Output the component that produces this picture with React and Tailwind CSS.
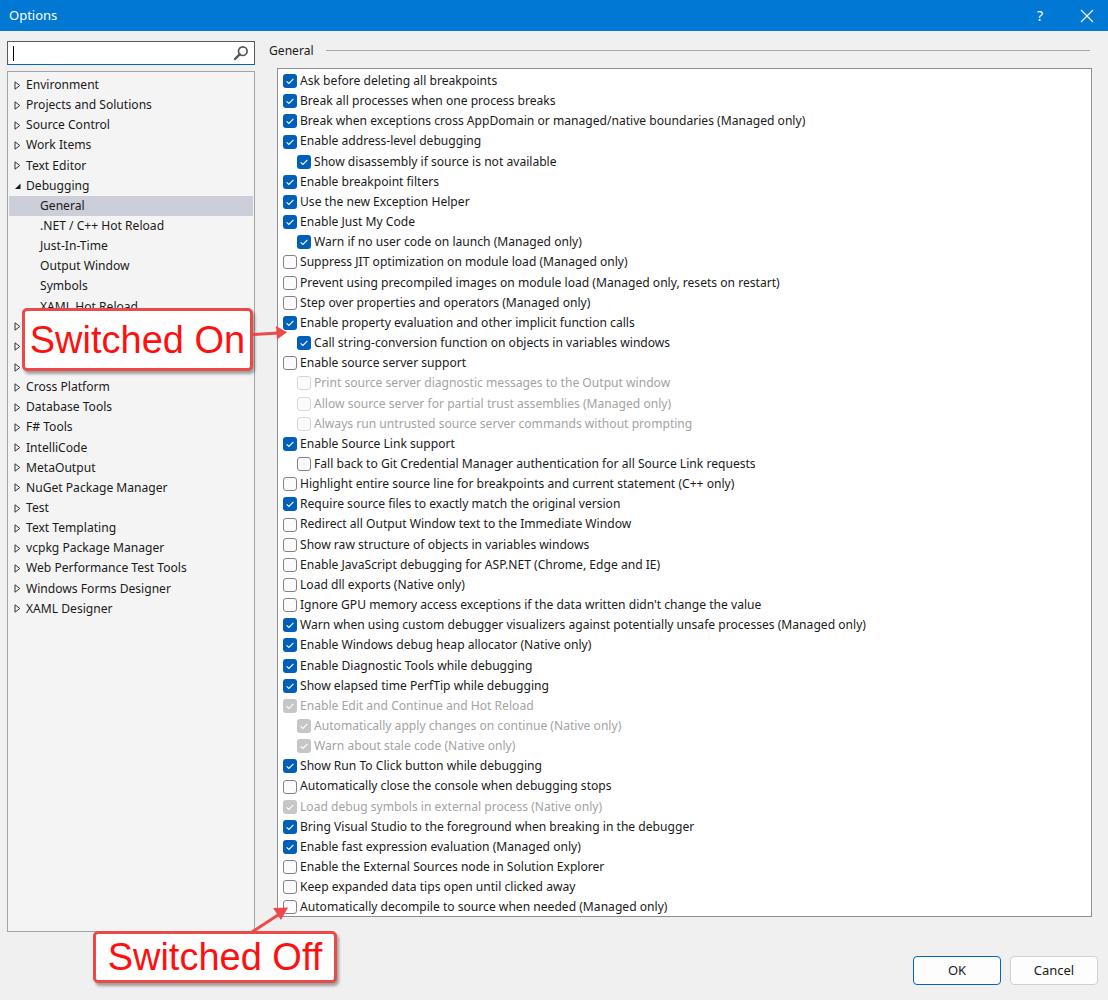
import React from 'react'

const items = [
  ['Ask before deleting all breakpoints', 1, 0, 0],
  ['Break all processes when one process breaks', 1, 0, 0],
  ['Break when exceptions cross AppDomain or managed/native boundaries (Managed only)', 1, 0, 0],
  ['Enable address-level debugging', 1, 0, 0],
  ['Show disassembly if source is not available', 1, 1, 0],
  ['Enable breakpoint filters', 1, 0, 0],
  ['Use the new Exception Helper', 1, 0, 0],
  ['Enable Just My Code', 1, 0, 0],
  ['Warn if no user code on launch (Managed only)', 1, 1, 0],
  ['Suppress JIT optimization on module load (Managed only)', 0, 0, 0],
  ['Prevent using precompiled images on module load (Managed only, resets on restart)', 0, 0, 0],
  ['Step over properties and operators (Managed only)', 0, 0, 0],
  ['Enable property evaluation and other implicit function calls', 1, 0, 0],
  ['Call string-conversion function on objects in variables windows', 1, 1, 0],
  ['Enable source server support', 0, 0, 0],
  ['Print source server diagnostic messages to the Output window', 0, 1, 1],
  ['Allow source server for partial trust assemblies (Managed only)', 0, 1, 1],
  ['Always run untrusted source server commands without prompting', 0, 1, 1],
  ['Enable Source Link support', 1, 0, 0],
  ['Fall back to Git Credential Manager authentication for all Source Link requests', 0, 1, 0],
  ['Highlight entire source line for breakpoints and current statement (C++ only)', 0, 0, 0],
  ['Require source files to exactly match the original version', 1, 0, 0],
  ['Redirect all Output Window text to the Immediate Window', 0, 0, 0],
  ['Show raw structure of objects in variables windows', 0, 0, 0],
  ['Enable JavaScript debugging for ASP.NET (Chrome, Edge and IE)', 0, 0, 0],
  ['Load dll exports (Native only)', 0, 0, 0],
  ["Ignore GPU memory access exceptions if the data written didn't change the value", 0, 0, 0],
  ['Warn when using custom debugger visualizers against potentially unsafe processes (Managed only)', 1, 0, 0],
  ['Enable Windows debug heap allocator (Native only)', 1, 0, 0],
  ['Enable Diagnostic Tools while debugging', 1, 0, 0],
  ['Show elapsed time PerfTip while debugging', 1, 0, 0],
  ['Enable Edit and Continue and Hot Reload', 1, 0, 1],
  ['Automatically apply changes on continue (Native only)', 1, 1, 1],
  ['Warn about stale code (Native only)', 1, 1, 1],
  ['Show Run To Click button while debugging', 1, 0, 0],
  ['Automatically close the console when debugging stops', 0, 0, 0],
  ['Load debug symbols in external process (Native only)', 1, 0, 1],
  ['Bring Visual Studio to the foreground when breaking in the debugger', 1, 0, 0],
  ['Enable fast expression evaluation (Managed only)', 1, 0, 0],
  ['Enable the External Sources node in Solution Explorer', 0, 0, 0],
  ['Keep expanded data tips open until clicked away', 0, 0, 0],
  ['Automatically decompile to source when needed (Managed only)', 0, 0, 0],
]

// [label, level, expanded, selected] — empty labels sit under the "Switched On" callout
const tree = [
  ['Environment', 0], ['Projects and Solutions', 0], ['Source Control', 0], ['Work Items', 0],
  ['Text Editor', 0], ['Debugging', 0, true], ['General', 1, false, true], ['.NET / C++ Hot Reload', 1],
  ['Just-In-Time', 1], ['Output Window', 1], ['Symbols', 1], ['XAML Hot Reload', 1],
  ['', 0], ['', 0], ['', 0],
  ['Cross Platform', 0], ['Database Tools', 0], ['F# Tools', 0], ['IntelliCode', 0], ['MetaOutput', 0],
  ['NuGet Package Manager', 0], ['Test', 0], ['Text Templating', 0], ['vcpkg Package Manager', 0],
  ['Web Performance Test Tools', 0], ['Windows Forms Designer', 0], ['XAML Designer', 0],
]

function Check({ on, off }) {
  if (on) {
    return (
      <div className={`w-[14px] h-[14px] rounded-[3px] shrink-0 flex items-center justify-center ${off ? 'bg-[#c6c6c6]' : 'bg-[#005fb8]'}`}>
        <svg width="14" height="14" viewBox="0 0 14 14">
          <path d="M3.6 7.3 L5.9 9.5 L10.4 4.8" fill="none" stroke="#fff" strokeWidth="1.1" />
        </svg>
      </div>
    )
  }
  return (
    <div className={`w-[14px] h-[14px] rounded-[3px] shrink-0 border ${off ? 'border-[#d7d7d7] bg-[#fbfbfb]' : 'border-[#877f8d] bg-[#fbfbfb]'}`} />
  )
}

function Tri({ open }) {
  if (open) {
    return (
      <svg width="7" height="8" viewBox="0 0 7 8" className="shrink-0">
        <polygon points="6.5,1.5 6.5,7 1,7" fill="#1a1a1a" />
      </svg>
    )
  }
  return (
    <svg width="7" height="9" viewBox="0 0 7 9" className="shrink-0">
      <polygon points="1,0.8 5.8,4.5 1,8.2" fill="none" stroke="#333" strokeWidth="1" />
    </svg>
  )
}

export default function App() {
  return (
    <div className="w-[1108px] h-[1000px] bg-[#f0f0f0] flex flex-col relative overflow-hidden text-[#1a1a1a]"
      style={{ fontFamily: '"Noto Sans", "Open Sans", sans-serif' }}>

      {/* title bar */}
      <div className="h-[31px] bg-[#0078d4] flex items-center text-white shrink-0">
        <span className="pl-[9px] text-[13px] flex-1">Options</span>
        <span className="text-[14px] w-[20px] text-center mr-[30px]">?</span>
        <svg width="14" height="14" viewBox="0 0 14 14" className="mr-[14px]">
          <path d="M1 1 L13 13 M13 1 L1 13" stroke="#fff" strokeWidth="1.2" />
        </svg>
      </div>

      <div className="flex pt-[10px] pl-[7px] h-[902px] shrink-0">
        {/* left side */}
        <div className="w-[248px] flex flex-col gap-[6px]">
          <div className="h-[24px] bg-white border border-[#5a5a5a] border-b-[#0067c0] flex items-center px-[5px]">
            <div className="w-px h-[15px] bg-black" />
            <div className="flex-1" />
            <svg width="16" height="16" viewBox="0 0 16 16">
              <circle cx="9.8" cy="6.2" r="4.3" fill="none" stroke="#555" strokeWidth="1.7" />
              <path d="M6.7 9.3 L2 14" stroke="#555" strokeWidth="2.4" strokeLinecap="round" />
            </svg>
          </div>
          <div className="h-[861px] bg-[#f4f4f4] border border-[#a4a4a4] pt-[3px] text-[12.1px]">
            {tree.map(([label, level, open, sel], i) => (
              <div key={i}
                className={`h-[20.15px] flex items-center mx-px ${sel ? 'bg-[#ccced9]' : ''}`}>
                {level === 0 ? (
                  <div className="flex items-center pl-[5px] gap-[5px]">
                    <Tri open={open} />
                    <span>{label}</span>
                  </div>
                ) : (
                  <span className="pl-[31px]">{label}</span>
                )}
              </div>
            ))}
          </div>
        </div>

        {/* right side */}
        <div className="flex-1 flex flex-col pl-[14px] pr-[16px]">
          <div className="h-[27px] flex items-start pt-[1px]">
            <span className="text-[12.1px] leading-[17px]">General</span>
            <div className="flex-1 h-px bg-[#a8a8a8] ml-[12px] mt-[8px] mr-[2px]" />
          </div>
          <div className="ml-[8px] h-[849px] bg-white border border-[#8f8f8f] pt-[2px] text-[12.1px]">
            {items.map(([label, on, indent, off]) => (
              <div key={label} className={`h-[20.17px] flex items-center gap-[3px] ${indent ? 'pl-[19px]' : 'pl-[5px]'}`}>
                <Check on={on} off={off} />
                <span className={`whitespace-nowrap ${off ? 'text-[#a3a3a3]' : ''}`}>{label}</span>
              </div>
            ))}
          </div>
        </div>
      </div>

      {/* buttons */}
      <div className="flex justify-end gap-[9px] pr-[10px] pt-[23px]">
        <button className="w-[88px] h-[29px] rounded-[4px] bg-[#fdfdfd] border border-[#0067c0] text-[13px]">OK</button>
        <button className="w-[88px] h-[29px] rounded-[4px] bg-[#fdfdfd] border border-[#d0d0d0] text-[13px]">Cancel</button>
      </div>

      {/* callout: switched on */}
      <div className="absolute left-[22px] top-[308px] w-[231px] h-[63px] bg-white border-[3px] border-[#ec4a4a] rounded-[5px] shadow-[2px_3px_3px_rgba(0,0,0,0.35)] flex items-center justify-center">
        <span className="text-[#ff1010] text-[38px] leading-none" style={{ fontFamily: '"Liberation Sans", Arial, sans-serif' }}>Switched On</span>
      </div>
      <svg className="absolute left-[250px] top-[320px]" width="42" height="26" viewBox="0 0 42 26">
        <path d="M2 14.5 L28 13" stroke="#ec4a4a" strokeWidth="3" />
        <polygon points="26,6 37,12.3 27,19.5" fill="#ec4a4a" />
      </svg>

      {/* callout: switched off */}
      <div className="absolute left-[93px] top-[931px] w-[244px] h-[52px] bg-white border-[3px] border-[#ec4a4a] rounded-[5px] shadow-[2px_3px_3px_rgba(0,0,0,0.35)] flex items-center justify-center">
        <span className="text-[#ff1010] text-[38px] leading-none" style={{ fontFamily: '"Liberation Sans", Arial, sans-serif' }}>Switched Off</span>
      </div>
      <svg className="absolute left-[245px] top-[900px]" width="50" height="36" viewBox="0 0 50 36">
        <path d="M7 32 L33 15" stroke="#ec4a4a" strokeWidth="3" />
        <polygon points="28,8 43,7.5 36,20" fill="#ec4a4a" />
      </svg>
    </div>
  )
}
